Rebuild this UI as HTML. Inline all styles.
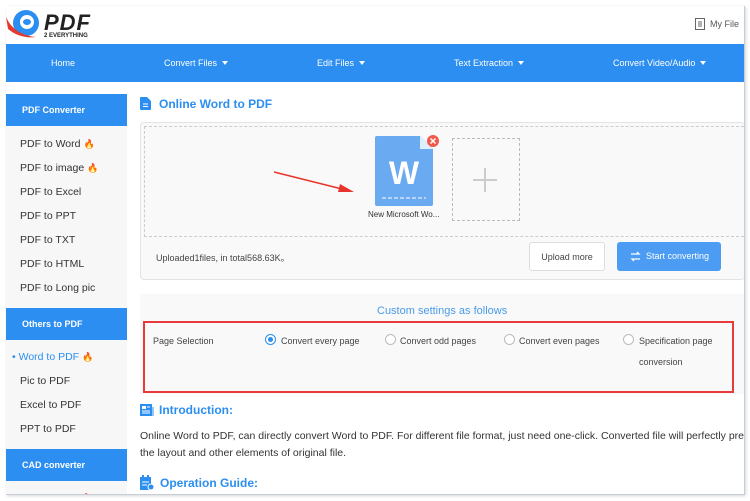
<!DOCTYPE html>
<html><head><meta charset="utf-8"><style>
*{margin:0;padding:0;box-sizing:border-box}
body{width:750px;height:501px;background:#fff;font-family:"Liberation Sans",sans-serif;position:relative;overflow:hidden}
.frame{position:absolute;left:6px;top:6px;width:739px;height:489px;background:#fff;border-right:1px solid #c8ccd4;border-bottom:1px solid #c8ccd4;box-shadow:1px 1px 3px #d4d8de;overflow:hidden}
.a{position:absolute}
.nav{left:0;top:38px;width:739px;height:38px;background:#2b8ef0;color:#fff;font-size:9px}
.nav span{position:absolute;top:14px}
.tri{display:inline-block;border-left:3.5px solid transparent;border-right:3.5px solid transparent;border-top:4px solid #fff;margin-left:5px;vertical-align:1px}
.side{left:0;top:88px;width:121px;height:410px;background:#f7f7f7}
.sh{position:absolute;left:0;width:121px;height:32px;background:#2b8ef0;color:#fff;font-weight:bold;font-size:9px;padding:11px 0 0 16px}
.si{position:absolute;left:14px;font-size:10.5px;color:#333}
.fire{color:#f5702a;font-size:9px;margin-left:3px}
.blue{color:#2b8ef0}
.radio{position:absolute;width:11px;height:11px;border:1px solid #bbb;border-radius:50%;background:#fff}
.lbl{position:absolute;font-size:9px;color:#444}
</style></head><body>
<div class="frame">
 <svg class="a" style="left:0;top:1px" width="36" height="36" viewBox="0 0 36 36">
  <circle cx="20" cy="16" r="13" fill="#2b8ef0"/>
  <circle cx="21" cy="15" r="7" fill="#fff"/>
  <ellipse cx="21" cy="15" rx="4" ry="3" fill="#2b8ef0"/>
  <path d="M0 10 Q8 28 30 30 Q14 32 2 22 Z" fill="#e63a2e"/>
 </svg>
 <div class="a" style="left:38px;top:4px;font-size:22px;font-weight:bold;font-style:italic;color:#222;letter-spacing:1px">PDF</div>
 <div class="a" style="left:38px;top:27px;font-size:6px;font-weight:bold;color:#222">2 EVERYTHING</div>
 <svg class="a" style="left:689px;top:12px" width="10" height="12" viewBox="0 0 10 12"><rect x=".5" y=".5" width="9" height="11" fill="none" stroke="#666"/><path d="M3 4h4M3 6h4M3 8h4" stroke="#666"/></svg>
 <div class="a" style="left:704px;top:13px;font-size:9px;color:#555">My File</div>
 <div class="a nav">
  <span style="left:45px">Home</span>
  <span style="left:158px">Convert Files<i class="tri"></i></span>
  <span style="left:311px">Edit Files<i class="tri"></i></span>
  <span style="left:448px">Text Extraction<i class="tri"></i></span>
  <span style="left:607px">Convert Video/Audio<i class="tri"></i></span>
 </div>
 <div class="a side">
  <div class="sh" style="top:0">PDF Converter</div>
  <div class="si" style="top:44px">PDF to Word<span class="fire">🔥</span></div>
  <div class="si" style="top:68px">PDF to image<span class="fire">🔥</span></div>
  <div class="si" style="top:92px">PDF to Excel</div>
  <div class="si" style="top:116px">PDF to PPT</div>
  <div class="si" style="top:140px">PDF to TXT</div>
  <div class="si" style="top:164px">PDF to HTML</div>
  <div class="si" style="top:188px">PDF to Long pic</div>
  <div class="sh" style="top:214px">Others to PDF</div>
  <div class="si blue" style="top:257px;left:6px">• Word to PDF<span class="fire">🔥</span></div>
  <div class="si" style="top:281px">Pic to PDF</div>
  <div class="si" style="top:305px">Excel to PDF</div>
  <div class="si" style="top:329px">PPT to PDF</div>
  <div class="sh" style="top:355px">CAD converter</div>
  <div class="si" style="top:398px">CAD to PDF<span class="fire">🔥</span></div>
 </div>
 <svg class="a" style="left:134px;top:91px" width="11" height="13" viewBox="0 0 11 13"><path d="M0 1Q0 0 1 0H7L11 4V12Q11 13 10 13H1Q0 13 0 12Z" fill="#2b8ef0"/><path d="M3 7h5M3 9.5h5" stroke="#fff"/></svg>
 <div class="a" style="left:153px;top:91px;font-size:12px;font-weight:bold;color:#2b8ef0">Online Word to PDF</div>
 <div class="a" style="left:134px;top:116px;width:605px;height:158px;background:#f9f9f9;border:1px solid #e4e4e4;border-radius:4px;border-right:none"></div>
 <div class="a" style="left:138px;top:120px;width:605px;height:111px;border:1px dashed #ccc"></div>
 <svg class="a" style="left:266px;top:164px" width="84" height="24" viewBox="0 0 84 24"><path d="M2 2L74 20" stroke="#e8352b" stroke-width="1.5"/><path d="M68 14L82 22L66 22Z" fill="#e8352b"/></svg>
 <svg class="a" style="left:366px;top:128px" width="68" height="74" viewBox="0 0 68 74">
  <path d="M3 4Q3 2 5 2H48L61 15V70Q61 72 59 72H5Q3 72 3 70Z" fill="#6aaaf0"/>
  <path d="M48 2V15H61Z" fill="#dfeefc"/>
  <text x="32" y="50" font-family="Liberation Sans" font-weight="bold" font-size="32" fill="#fff" text-anchor="middle">W</text>
  <path d="M10 64H54" stroke="#fff" stroke-dasharray="4 2"/>
  <circle cx="61" cy="7" r="6" fill="#f05a4a"/><path d="M58.5 4.5l5 5M63.5 4.5l-5 5" stroke="#fff" stroke-width="1.5"/>
 </svg>
 <div class="a" style="left:362px;top:204px;font-size:8px;color:#333">New Microsoft Wo...</div>
 <div class="a" style="left:446px;top:132px;width:68px;height:83px;border:1px dashed #bbb"></div>
 <div class="a" style="left:467px;top:173px;width:24px;height:2px;background:#ccc"></div>
 <div class="a" style="left:478px;top:162px;width:2px;height:24px;background:#ccc"></div>
 <div class="a" style="left:150px;top:245px;font-size:9px;color:#444">Uploaded1files, in total568.63K。</div>
 <div class="a" style="left:523px;top:236px;width:76px;height:29px;border:1px solid #ddd;border-radius:3px;background:#fff;font-size:9px;color:#444;text-align:center;line-height:28px">Upload more</div>
 <div class="a" style="left:611px;top:236px;width:104px;height:29px;border-radius:3px;background:#4b9cf2;font-size:9px;color:#fff;line-height:29px;padding-left:29px">Start converting</div>
 <svg class="a" style="left:624px;top:245px" width="11" height="11" viewBox="0 0 11 11"><path d="M1 3H9L7 1M10 8H2L4 10" stroke="#fff" fill="none" stroke-width="1.3"/></svg>
 <div class="a" style="left:134px;top:288px;width:605px;height:100px;background:#f9f9f9"></div>
 <div class="a" style="left:371px;top:299px;font-size:11px;color:#4a9ce8">Custom settings as follows</div>
 <div class="a" style="left:137px;top:315px;width:591px;height:72px;border:2px solid #e8393b"></div>
 <div class="lbl" style="left:147px;top:330px">Page Selection</div>
 <div class="radio" style="left:259px;top:328px;border-color:#2b8ef0"></div>
 <div class="a" style="left:262px;top:331px;width:5px;height:5px;border-radius:50%;background:#2b8ef0"></div>
 <div class="lbl" style="left:275px;top:330px">Convert every page</div>
 <div class="radio" style="left:379px;top:328px"></div>
 <div class="lbl" style="left:394px;top:330px">Convert odd pages</div>
 <div class="radio" style="left:498px;top:328px"></div>
 <div class="lbl" style="left:513px;top:330px">Convert even pages</div>
 <div class="radio" style="left:617px;top:328px"></div>
 <div class="lbl" style="left:633px;top:330px">Specification page</div>
 <div class="lbl" style="left:633px;top:351px">conversion</div>
 <svg class="a" style="left:134px;top:398px" width="14" height="12" viewBox="0 0 14 12"><rect x="0" y="0" width="12" height="12" fill="#2b8ef0"/><rect x="2" y="2" width="4" height="3" fill="#fff"/><path d="M7 3h3M2 7h8M2 9h8" stroke="#fff"/><path d="M13 3v9" stroke="#2b8ef0"/></svg>
 <div class="a" style="left:153px;top:397px;font-size:12px;font-weight:bold;color:#2b8ef0">Introduction:</div>
 <div class="a" style="left:134px;top:422px;font-size:10.5px;color:#333;white-space:nowrap;line-height:17px">Online Word to PDF, can directly convert Word to PDF. For different file format, just need one-click. Converted file will perfectly present<br>the layout and other elements of original file.</div>
 <svg class="a" style="left:134px;top:469px" width="14" height="15" viewBox="0 0 14 15"><rect x="0" y="2" width="11" height="13" fill="#2b8ef0"/><path d="M3 0v4M8 0v4" stroke="#2b8ef0" stroke-width="2"/><path d="M2 7h7M2 10h5" stroke="#fff"/><circle cx="11" cy="12" r="3" fill="#2b8ef0" stroke="#fff"/></svg>
 <div class="a" style="left:154px;top:470px;font-size:12px;font-weight:bold;color:#2b8ef0">Operation Guide:</div>
</div>
</body></html>
